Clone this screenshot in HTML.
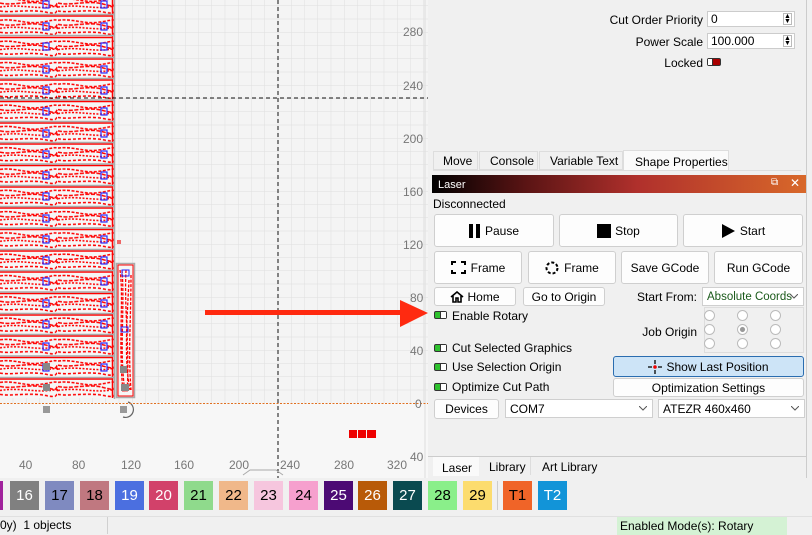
<!DOCTYPE html>
<html><head><meta charset="utf-8"><style>
*{box-sizing:border-box;margin:0;padding:0}
body{width:812px;height:535px;overflow:hidden;background:#f0f0f0;font-family:"Liberation Sans",sans-serif;font-size:12px;color:#000;position:relative}
.abs{position:absolute}
.btn{position:absolute;background:#fdfdfd;border:1px solid #cfcfcf;border-radius:3px;display:flex;align-items:center;justify-content:center;font-size:12px}
.sw{position:absolute;top:481px;width:29px;height:29px;font-size:15px;display:flex;align-items:center;justify-content:center}
.tog{position:absolute;width:13px;height:8px;border:1px solid #333;border-radius:2px;background:#2ec12e}
.tog::after{content:"";position:absolute;right:0;top:0;width:5px;height:6px;background:#fff;border-left:1px solid #333}
.lbl{position:absolute;font-size:12px;white-space:nowrap}
.rl{position:absolute;font-size:12px;white-space:nowrap;text-align:right}
.combo{position:absolute;background:#fff;border:1px solid #cfcfcf;font-size:12px;padding-left:4px;display:flex;align-items:center;white-space:nowrap;overflow:hidden}
.combo svg{position:absolute;right:5px;top:6px}
.rad{position:absolute;width:11px;height:11px;border:1px solid #bbb;border-radius:50%;background:#fff}
</style></head><body>
<svg class="abs" style="left:0;top:0" width="428" height="478">
<defs>
<pattern id="mg" width="13.25" height="13.25" patternUnits="userSpaceOnUse" x="-27" y="403"><path d="M0 0H13.25M0 0V13.25" stroke="#dedede" stroke-width="1" fill="none"/></pattern>
<pattern id="wood" width="58" height="21.3" patternUnits="userSpaceOnUse" x="0" y="-5">
<path d="M0 4 C15 2 25 8 40 6 S52 3 58 4" stroke="#f00" stroke-width="1.5" stroke-dasharray="3 1.5" fill="none"/>
<path d="M0 8 C12 11 30 5 45 9 S54 10 58 8" stroke="#f00" stroke-width="1.5" stroke-dasharray="4 1.5" fill="none"/>
<path d="M0 12 C20 9 35 14 50 12 S55 13 58 12" stroke="#f00" stroke-width="1.5" stroke-dasharray="2 1.5" fill="none"/>
<path d="M0 16 C10 18 30 14 45 17 S54 16 58 16" stroke="#f00" stroke-width="1.5" stroke-dasharray="3 2" fill="none"/>
</pattern>
</defs>
<rect width="428" height="478" fill="#f7f7f7"/>
<rect x="0" y="0" width="428" height="403" fill="#f4f4f4"/>
<rect x="0" y="0" width="428" height="403" fill="url(#mg)"/>
<line x1="425" y1="0" x2="425" y2="478" stroke="#ddd"/>
<g>
<rect x="-2" y="-5" width="116" height="403" fill="#f6f6f6"/>
<rect x="-2" y="-5" width="116" height="403" fill="url(#wood)"/>
<g fill="none" stroke="#f00" stroke-width="1.5">
<path d="M-2 16H113M-2 37.5H113M-2 59H113M-2 80H113M-2 101.5H113M-2 123H113M-2 144H113M-2 165.5H113M-2 187H113M-2 208H113M-2 229.5H113M-2 251H113M-2 272H113M-2 293.5H113M-2 315H113M-2 336H113M-2 357.5H113M-2 379H113M112.5 -5V398"/>
</g>
<g stroke="#aaa" stroke-width="1.5" fill="none">
<path d="M-2 14.5H114M-2 35.5H114M-2 57.5H114M-2 78.5H114M-2 100H114M-2 121.5H114M-2 142.5H114M-2 164H114M-2 185.5H114M-2 206.5H114M-2 228H114M-2 249.5H114M-2 270.5H114M-2 292H114M-2 313.5H114M-2 334.5H114M-2 356H114M-2 377.5H114M114.5 -5V399"/>
</g>
<g fill="none" stroke="#2a2aff" stroke-width="1.2">
<rect x="43" y="1" width="6" height="7"/><rect x="101" y="1" width="6" height="7"/>
<rect x="43" y="23" width="6" height="7"/><rect x="101" y="23" width="6" height="7"/>
<rect x="43" y="43" width="6" height="7"/><rect x="101" y="43" width="6" height="7"/>
<rect x="43" y="66" width="6" height="7"/><rect x="101" y="66" width="6" height="7"/>
<rect x="43" y="87" width="6" height="7"/><rect x="101" y="87" width="6" height="7"/>
<rect x="43" y="108" width="6" height="7"/><rect x="101" y="108" width="6" height="7"/>
<rect x="43" y="130" width="6" height="7"/><rect x="101" y="130" width="6" height="7"/>
<rect x="43" y="151" width="6" height="7"/><rect x="101" y="151" width="6" height="7"/>
<rect x="43" y="172" width="6" height="7"/><rect x="101" y="172" width="6" height="7"/>
<rect x="43" y="193" width="6" height="7"/><rect x="101" y="193" width="6" height="7"/>
<rect x="43" y="215" width="6" height="7"/><rect x="101" y="215" width="6" height="7"/>
<rect x="43" y="236" width="6" height="7"/><rect x="101" y="236" width="6" height="7"/>
<rect x="43" y="257" width="6" height="7"/><rect x="101" y="257" width="6" height="7"/>
<rect x="43" y="278" width="6" height="7"/><rect x="101" y="278" width="6" height="7"/>
<rect x="43" y="300" width="6" height="7"/><rect x="101" y="300" width="6" height="7"/>
<rect x="43" y="321" width="6" height="7"/><rect x="101" y="321" width="6" height="7"/>
<rect x="43" y="343" width="6" height="7"/><rect x="101" y="343" width="6" height="7"/>
<rect x="43" y="364" width="6" height="7"/><rect x="101" y="364" width="6" height="7"/>
</g>
<rect x="116.5" y="263.5" width="18" height="134" fill="#f6f6f6" stroke="#aaa" stroke-width="1.5"/>
<rect x="118" y="265" width="15" height="131" fill="none" stroke="#f00"/>
<path d="M120 270C124 300 118 340 123 392M122 270C125 310 119 350 125 392M126 270C124 310 130 350 127 392M129 280C127 320 124 360 130 390M131 275C131 320 128 350 131 390" stroke="#f00" stroke-width="1.3" stroke-dasharray="3 1.5" fill="none"/>
<rect x="122" y="270" width="7" height="6" fill="none" stroke="#22f"/>
<rect x="121" y="327" width="7" height="5" fill="none" stroke="#22f"/>
<rect x="120" y="366" width="7" height="7" fill="#888"/><rect x="43" y="363" width="7" height="7" fill="#888"/>
<rect x="43" y="384" width="7" height="7" fill="#888"/><rect x="121" y="384" width="8" height="7" fill="#888"/>
<rect x="43" y="406" width="7" height="7" fill="#999"/><rect x="120" y="406" width="7" height="7" fill="#999"/>
<path d="M128 402a7 7 0 0 1-5 15" stroke="#666" stroke-width="1.2" fill="none"/>
<rect x="117" y="240" width="4" height="4" fill="#e66"/>
</g>
<line x1="278" y1="0" x2="278" y2="478" stroke="#111" stroke-dasharray="4 3"/>
<line x1="0" y1="98" x2="428" y2="98" stroke="#111" stroke-dasharray="4 3"/>
<line x1="0" y1="403.5" x2="428" y2="403.5" stroke="#e07020" stroke-dasharray="2 1.5" stroke-width="1"/>
<rect x="205" y="310" width="200" height="5" fill="#ff2a10"/>
<polygon points="400,300 428,313 400,327" fill="#ff2a10"/>
<g fill="#e00"><rect x="349" y="430" width="8" height="8"/><rect x="358" y="430" width="8" height="8"/><rect x="367" y="430" width="9" height="8"/></g>
<g font-family="Liberation Sans" font-size="12" fill="#777">
<text x="403" y="36">280</text><text x="403" y="90">240</text><text x="403" y="143">200</text><text x="403" y="196">160</text><text x="403" y="249">120</text><text x="410" y="302">80</text><text x="410" y="355">40</text><text x="415" y="408">0</text><text x="410" y="461">40</text>
<text x="19" y="469">40</text><text x="72" y="469">80</text><text x="121" y="469">120</text><text x="174" y="469">160</text><text x="229" y="469">200</text><text x="280" y="469">240</text><text x="334" y="469">280</text><text x="387" y="469">320</text>
</g>
<path d="M243 475L250 470H276L283 475" stroke="#aaa" fill="none"/>
</svg>
<div class="abs" style="left:0;top:478px;width:812px;height:37px;background:#f0f0f0"></div>
<div class="sw" style="left:-26px;background:#a0229c"></div>
<div class="sw" style="left:10px;background:#808080;color:#fff">16</div>
<div class="sw" style="left:45px;background:#7f8ac0">17</div>
<div class="sw" style="left:80px;background:#c07880">18</div>
<div class="sw" style="left:115px;background:#4b6fe0;color:#fff">19</div>
<div class="sw" style="left:149px;background:#d2416a;color:#fff">20</div>
<div class="sw" style="left:184px;background:#8fda8c">21</div>
<div class="sw" style="left:219px;background:#f0b88a">22</div>
<div class="sw" style="left:254px;background:#f6c6de">23</div>
<div class="sw" style="left:289px;background:#f6a0ce">24</div>
<div class="sw" style="left:324px;background:#4c0a74;color:#fff">25</div>
<div class="sw" style="left:358px;background:#b85a08;color:#fff">26</div>
<div class="sw" style="left:393px;background:#0a4a50;color:#fff">27</div>
<div class="sw" style="left:428px;background:#8aef8a">28</div>
<div class="sw" style="left:463px;background:#fcdc6e">29</div>
<div class="abs" style="left:497px;top:481px;width:1px;height:29px;background:#ccc"></div>
<div class="sw" style="left:503px;background:#f06428">T1</div>
<div class="sw" style="left:538px;background:#1294d8;color:#fff">T2</div>
<div class="abs" style="left:0;top:516px;width:812px;height:19px;background:#f0f0f0;border-top:1px solid #e0e0e0"></div>
<div class="lbl" style="left:0;top:518px">0y)&nbsp; 1 objects</div>
<div class="abs" style="left:107px;top:517px;width:1px;height:17px;background:#d0d0d0"></div>
<div class="abs" style="left:617px;top:517px;width:170px;height:18px;background:#d4f2d4"></div>
<div class="lbl" style="left:620px;top:519px">Enabled Mode(s): Rotary</div>
<div class="abs" style="left:428px;top:0;width:384px;height:478px;background:#f0f0f0"></div>
<div class="abs" style="left:806px;top:0;width:6px;height:478px;background:#f0f0f0;border-left:1px solid #ccc"></div>
<div class="rl" style="right:109px;top:13px">Cut Order Priority</div>
<div class="abs" style="left:707px;top:11px;width:88px;height:16px;background:#fff;border:1px solid #ccc;padding-left:3px">0</div>
<div class="rl" style="right:109px;top:35px">Power Scale</div>
<div class="abs" style="left:707px;top:33px;width:88px;height:16px;background:#fff;border:1px solid #ccc;padding-left:3px">100.000</div>
<div class="abs" style="left:783px;top:13px;width:9px;height:12px;border:1px solid #bbb;font-size:7px;line-height:5px;text-align:center">▲<br>▼</div>
<div class="abs" style="left:783px;top:35px;width:9px;height:12px;border:1px solid #bbb;font-size:7px;line-height:5px;text-align:center">▲<br>▼</div>
<div class="rl" style="right:109px;top:56px">Locked</div>
<div class="abs" style="left:707px;top:58px;width:14px;height:8px;border:1px solid #333;border-radius:2px;background:#a00"><div style="width:5px;height:6px;background:#fff;border-right:1px solid #333"></div></div>
<div class="abs" style="left:433px;top:151px;width:368px;height:20px;border-bottom:1px solid #ddd"></div>
<div class="abs" style="left:433px;top:151px;width:45px;height:19px;background:#f0f0f0;border:1px solid #ddd;padding:2px 0 0 9px">Move</div>
<div class="abs" style="left:479px;top:151px;width:59px;height:19px;border:1px solid #ddd;padding:2px 0 0 10px">Console</div>
<div class="abs" style="left:539px;top:151px;width:84px;height:19px;border:1px solid #ddd;padding:2px 0 0 10px">Variable Text</div>
<div class="abs" style="left:623px;top:150px;width:106px;height:21px;background:#fafafa;border:1px solid #ddd;padding:4px 0 0 11px">Shape Properties</div>
<div class="abs" style="left:432px;top:175px;width:374px;height:18px;background:linear-gradient(90deg,#000 0%,#5a1414 25%,#b0302c 55%,#d8682a 100%)"></div>
<div class="lbl" style="left:438px;top:179px;color:#fff;font-size:11px">Laser</div>
<div class="lbl" style="left:771px;top:177px;color:#fff;font-size:10px">⧉</div>
<div class="lbl" style="left:790px;top:176px;color:#fff;font-size:12px">✕</div>
<div class="lbl" style="left:433px;top:197px">Disconnected</div>
<div class="btn" style="left:434px;top:214px;width:120px;height:33px"><span style="display:inline-block;width:4px;height:14px;background:#000;margin-right:3px"></span><span style="display:inline-block;width:4px;height:14px;background:#000;margin-right:5px"></span>Pause</div>
<div class="btn" style="left:559px;top:214px;width:119px;height:33px"><span style="display:inline-block;width:14px;height:14px;background:#000;margin-right:4px"></span>Stop</div>
<div class="btn" style="left:683px;top:214px;width:120px;height:33px"><svg width="14" height="14" style="margin-right:5px"><polygon points="1,0 14,7 1,14" fill="#000"/></svg>Start</div>
<div class="btn" style="left:434px;top:251px;width:88px;height:33px"><svg width="15" height="13" style="margin-right:5px"><path d="M1 4V1H5M10 1H14V4M14 9V12H10M5 12H1V9" stroke="#000" stroke-width="2" fill="none"/></svg>Frame</div>
<div class="btn" style="left:528px;top:251px;width:88px;height:33px"><svg width="14" height="14" style="margin-right:5px"><circle cx="7" cy="7" r="5.5" stroke="#000" stroke-width="2" stroke-dasharray="3 2" fill="none"/></svg>Frame</div>
<div class="btn" style="left:621px;top:251px;width:88px;height:33px">Save GCode</div>
<div class="btn" style="left:714px;top:251px;width:89px;height:33px">Run GCode</div>
<div class="btn" style="left:434px;top:287px;width:82px;height:19px"><svg width="14" height="12" style="margin-right:3px"><path d="M1 6L7 1L13 6M3 5V11H6V7H8V11H11V5" stroke="#000" stroke-width="1.6" fill="none"/></svg>Home</div>
<div class="btn" style="left:523px;top:287px;width:82px;height:19px">Go to Origin</div>
<div class="rl" style="right:115px;top:290px">Start From:</div>
<div class="combo" style="left:702px;top:287px;width:102px;height:19px;color:#1a5a1a;font-size:11.5px">Absolute Coords<svg width="8" height="5"><path d="M0 0L4 4L8 0" stroke="#555" fill="none"/></svg></div>
<div class="tog" style="left:434px;top:311px"></div>
<div class="lbl" style="left:452px;top:309px">Enable Rotary</div>
<div class="abs" style="left:704px;top:307px;width:100px;height:46px;border:1px solid #ddd"></div>
<div class="rad" style="left:704px;top:310px"></div><div class="rad" style="left:737px;top:310px"></div><div class="rad" style="left:770px;top:310px"></div>
<div class="rad" style="left:704px;top:324px"></div><div class="rad" style="left:737px;top:324px;background:radial-gradient(#999 35%,#fff 45%)"></div><div class="rad" style="left:770px;top:324px"></div>
<div class="rad" style="left:704px;top:338px"></div><div class="rad" style="left:737px;top:338px"></div><div class="rad" style="left:770px;top:338px"></div>
<div class="rl" style="right:115px;top:325px">Job Origin</div>
<div class="tog" style="left:434px;top:344px"></div>
<div class="lbl" style="left:452px;top:341px">Cut Selected Graphics</div>
<div class="tog" style="left:434px;top:363px"></div>
<div class="lbl" style="left:452px;top:360px">Use Selection Origin</div>
<div class="tog" style="left:434px;top:383px"></div>
<div class="lbl" style="left:452px;top:380px">Optimize Cut Path</div>
<div class="btn" style="left:613px;top:356px;width:191px;height:21px;background:#cde4f7;border-color:#2a6db0"><svg width="14" height="14" style="margin-right:4px"><path d="M0 7H4M10 7H14M7 0V4M7 10V14" stroke="#000" stroke-width="1.3"/><circle cx="7" cy="7" r="1.8" fill="#e00"/></svg>Show Last Position</div>
<div class="btn" style="left:613px;top:378px;width:191px;height:19px">Optimization Settings</div>
<div class="btn" style="left:434px;top:399px;width:65px;height:20px">Devices</div>
<div class="combo" style="left:505px;top:399px;width:148px;height:19px">COM7<svg width="8" height="5"><path d="M0 0L4 4L8 0" stroke="#555" fill="none"/></svg></div>
<div class="combo" style="left:658px;top:399px;width:147px;height:19px">ATEZR 460x460<svg width="8" height="5"><path d="M0 0L4 4L8 0" stroke="#555" fill="none"/></svg></div>
<div class="abs" style="left:428px;top:456px;width:378px;height:1px;background:#ccc"></div>
<div class="abs" style="left:433px;top:457px;width:46px;height:19px;background:#fafafa;padding:4px 0 0 9px">Laser</div>
<div class="abs" style="left:479px;top:457px;width:52px;height:18px;border-right:1px solid #ddd;padding:3px 0 0 10px">Library</div>
<div class="abs" style="left:532px;top:457px;width:70px;height:18px;padding:3px 0 0 10px">Art Library</div>
</body></html>
